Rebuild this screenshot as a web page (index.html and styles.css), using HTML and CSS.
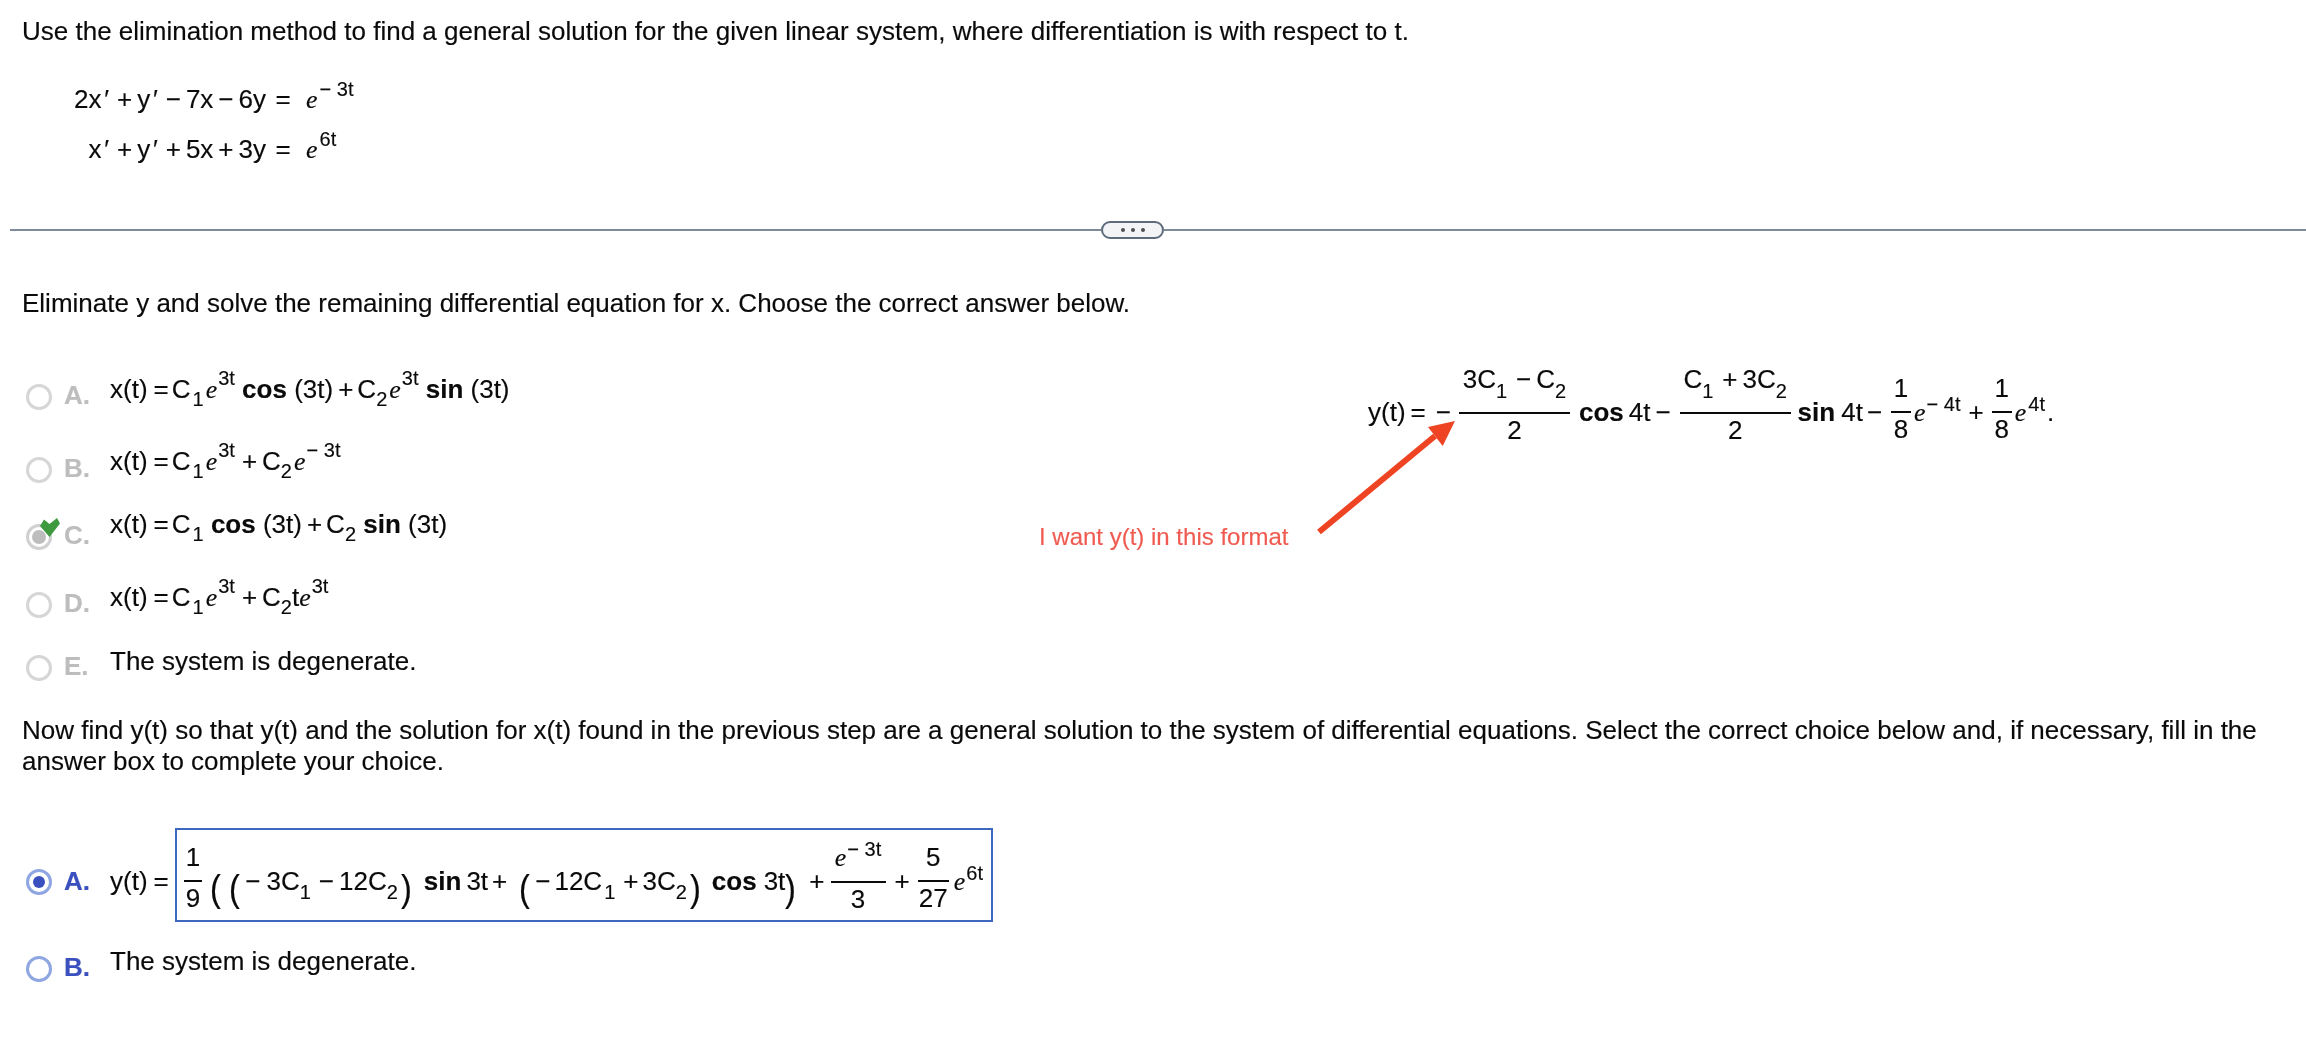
FILE: index.html
```html
<!DOCTYPE html>
<html lang="en">
<head>
<meta charset="utf-8">
<title>Elimination method</title>
<link rel="stylesheet" href="styles.css">
</head>
<body>
<main class="page">
  <p class="prompt first">Use the elimination method to find a general solution for the given linear system, where differentiation is with respect to t.</p>

  <div class="system">
    <div class="lhs">2x<i class="prime">′</i><span class="op">+</span>y<i class="prime">′</i><span class="op">−</span>7x<span class="op">−</span>6y</div>
    <div class="eq">=</div>
    <div class="rhs"><em>e</em><sup class="up">−&nbsp;3t</sup></div>
    <div class="lhs">x<i class="prime">′</i><span class="op">+</span>y<i class="prime">′</i><span class="op">+</span>5x<span class="op">+</span>3y</div>
    <div class="eq">=</div>
    <div class="rhs"><em>e</em><sup class="up">6t</sup></div>
  </div>

  <div class="divider">
    <span class="rule rule-left"></span>
    <span class="pill"><b></b><b></b><b></b></span>
    <span class="rule rule-right"></span>
  </div>

  <p class="prompt second">Eliminate y and solve the remaining differential equation for x. Choose the correct answer below.</p>

  <div class="choices muted">
    <div class="choice r1">
      <span class="letter"><span class="radio"></span>A.</span>
      <span class="math">x(t)<span class="eqs">=</span>C<sub class="ml-2">1</sub><em class="ml-2">e</em><sup class="hi">3t</sup> <b>cos</b> (3t)<span class="op">+</span>C<sub>2</sub><em class="ml-2">e</em><sup class="hi">3t</sup> <b>sin</b> (3t)</span>
    </div>
    <div class="choice r2">
      <span class="letter"><span class="radio"></span>B.</span>
      <span class="math">x(t)<span class="eqs">=</span>C<sub class="ml-2">1</sub><em class="ml-2">e</em><sup class="hi">3t</sup><span class="op wide">+</span>C<sub>2</sub><em class="ml-2">e</em><sup class="hi">−&nbsp;3t</sup></span>
    </div>
    <div class="choice r3">
      <span class="letter"><span class="radio picked">
        <svg class="tick" viewBox="0 0 20 19" aria-hidden="true"><path d="M0 8 L4 1.5 L9.5 6 L17 0 L20 5.5 L9.5 19 Z"/></svg>
      </span>C.</span>
      <span class="math">x(t)<span class="eqs">=</span>C<sub class="ml-2">1</sub> <b>cos</b> (3t)<span class="op">+</span>C<sub>2</sub> <b>sin</b> (3t)</span>
    </div>
    <div class="choice r4">
      <span class="letter"><span class="radio"></span>D.</span>
      <span class="math">x(t)<span class="eqs">=</span>C<sub class="ml-2">1</sub><em class="ml-2">e</em><sup class="hi">3t</sup><span class="op wide">+</span>C<sub>2</sub>t<em>e</em><sup class="hi">3t</sup></span>
    </div>
    <div class="choice r5">
      <span class="letter"><span class="radio"></span>E.</span>
      <span class="math">The system is degenerate.</span>
    </div>
  </div>

  <p class="prompt third">Now find y(t) so that y(t) and the solution for x(t) found in the previous step are a general solution to the system of differential equations. Select the correct choice below and, if necessary, fill in the answer box to complete your choice.</p>

  <div class="choices active">
    <div class="choice boxed">
      <span class="letter"><span class="radio on"></span>A.</span>
      <span class="math">y(t)<span class="eqs">=</span><span class="answer"><span class="frac w18"><span class="num">1</span><span class="den">9</span></span><span class="big ml-9">(</span><span class="big ml-10">(</span><span class="ml-6 mr-6">−</span>3C<sub>1</sub><span class="ml-8 mr-5">−</span>12C<sub>2</sub><span class="big ml-4">)</span><b class="ml-13">sin</b><span class="ml-5">3t</span><span class="ml-4 mr-13">+</span><span class="big">(</span><span class="ml-6 mr-4">−</span>12C<sub class="ml-2">1</sub><span class="ml-8 mr-4">+</span>3C<sub>2</sub><span class="big ml-4">)</span><b class="ml-12">cos</b><span class="ml-7">3t</span><span class="big ml-1">)</span><span class="ml-14 mr-6">+</span><span class="frac w55"><span class="num"><em>e</em><sup class="up ml-1">−&nbsp;3t</sup></span><span class="den">3</span></span><span class="ml-9 mr-8">+</span><span class="frac w31"><span class="num">5</span><span class="den">27</span></span><em class="ml-5">e</em><sup class="up ml-1">6t</sup></span></span>
    </div>
    <div class="choice plain">
      <span class="letter"><span class="radio"></span>B.</span>
      <span class="math">The system is degenerate.</span>
    </div>
  </div>

  <aside class="note">
    <div class="formula">y(t)<span class="ml-5">=</span><span class="ml-10">−</span><span class="frac tall w111 ml-8"><span class="num">3C<sub>1</sub><span class="ml-9 mr-5">−</span>C<sub>2</sub></span><span class="den">2</span></span><b class="ml-9">cos</b><span class="ml-5">4t</span><span class="ml-5">−</span><span class="frac tall w111 ml-9"><span class="num">C<sub>1</sub><span class="ml-9 mr-5">+</span>3C<sub>2</sub></span><span class="den">2</span></span><b class="ml-7">sin</b><span class="ml-6">4t</span><span class="ml-4">−</span><span class="frac w20 ml-9"><span class="num">1</span><span class="den">8</span></span><em class="ml-3">e</em><sup class="up ml-1">−&nbsp;4t</sup><span class="ml-8">+</span><span class="frac w20 ml-8"><span class="num">1</span><span class="den">8</span></span><em class="ml-3">e</em><sup class="up ml-2">4t</sup><span class="ml-2">.</span></div>
    <svg class="arrow" viewBox="0 0 150 125" aria-hidden="true">
      <line x1="3" y1="114" x2="119" y2="18"/>
      <polygon points="139,3 112,9 126.7,28"/>
    </svg>
    <div class="label">I want y(t) in this format</div>
  </aside>
</main>
</body>
</html>
```
FILE: styles.css
```css
* { box-sizing: border-box; }
html, body { margin: 0; padding: 0; background: #fff; }
body {
  font-family: "Liberation Sans", Arial, sans-serif;
  font-size: 26px;
  line-height: 32px;
  color: #0a0a0a;
  -webkit-text-stroke: 0.15px currentColor;
}
.page { position: relative; width: 2306px; height: 1054px; overflow: hidden; filter: blur(0.35px); }

.prompt { margin: 0 0 0 22px; }
.prompt.first { padding-top: 15px; }
.prompt.second { margin-top: 48px; }
.prompt.third { margin-top: 30px; width: 2270px; line-height: 31px; }

em { font-family: "Liberation Serif", serif; font-style: italic; }
sup, sub { font-size: 20px; line-height: 0; }
sup.up { vertical-align: 10px; }
sup.hi { vertical-align: 13px; margin-left: 1px; }
sub { vertical-align: -8px; }
.op { margin: 0 4px 0 5px; }
.op.wide { margin: 0 5px 0 7px; }
.eqs { margin: 0 3px 0 6px; }

.ml-1 { margin-left: 1px; } .ml-2 { margin-left: 2px; } .ml-3 { margin-left: 3px; }
.ml-4 { margin-left: 4px; } .ml-5 { margin-left: 5px; } .ml-6 { margin-left: 6px; }
.ml-7 { margin-left: 7px; } .ml-8 { margin-left: 8px; } .ml-9 { margin-left: 9px; }
.ml-10 { margin-left: 10px; } .ml-12 { margin-left: 12px; } .ml-13 { margin-left: 13px; }
.ml-14 { margin-left: 14px; }
.mr-4 { margin-right: 4px; } .mr-5 { margin-right: 5px; } .mr-6 { margin-right: 6px; }
.mr-8 { margin-right: 8px; } .mr-13 { margin-right: 13px; }

.system {
  display: grid;
  grid-template-columns: 192px 34px auto;
  grid-auto-rows: 50px;
  margin: 27px 0 0 74px;
  line-height: 50px;
}
.system .op { margin: 0 5px; }
.system sup.up { vertical-align: 12px; margin-left: 2px; }
.lhs { text-align: right; white-space: nowrap; }
.eq { text-align: center; }
.rhs { padding-left: 6px; }
.prime { display: inline-block; width: 10.5px; font-style: normal; font-size: 26px; line-height: 0; text-align: center; }

.divider { display: flex; align-items: center; margin: 47px 0 0 10px; height: 18px; }
.rule { display: block; height: 2px; background: #7f8b9b; }
.rule-left { width: 1091px; }
.rule-right { flex: 1; }
.pill {
  width: 63px; height: 18px;
  display: flex; align-items: center; justify-content: center; gap: 6px;
  border: 2px solid #5d6b7b; border-radius: 9px; background: #f2f4f6;
}
.pill b { width: 4px; height: 4px; border-radius: 50%; background: #4f4f4f; }

.choices { margin-left: 26px; }
.choices.muted {
  display: grid;
  grid-template-rows: 72px 63px 73px 64px 40px;
  margin-top: 54px;
}
.choice { display: flex; align-items: baseline; }
.letter {
  flex: none;
  position: relative;
  top: var(--shift);
  width: 84px;
  padding-left: 38px;
  font-weight: 700;
  color: #bdbdbd;
}
.r1 { --shift: 6px; }
.r2 { --shift: 7px; }
.r3 { --shift: 11px; }
.r4 { --shift: 6px; }
.r5 { --shift: 5px; }
.boxed { --shift: 0px; }
.plain { --shift: 6px; }

.radio {
  position: absolute;
  left: 0; top: 5px;
  width: 26px; height: 26px;
  border: 3px solid #d6d6d6;
  border-radius: 50%;
}
.math { white-space: nowrap; }

.radio.picked { border-color: #d0d0d0; }
.radio.picked::after {
  content: ""; position: absolute; left: 3px; top: 3px;
  width: 14px; height: 14px; border-radius: 50%; background: #bdbdbd;
}
.tick { position: absolute; left: 11px; top: -9px; width: 20px; height: 19px; z-index: 1; }
.tick path { fill: #3f9a3f; }

.active .letter { color: #3b50bf; }
.active .radio { border-color: #8fa6e2; }
.radio.on { top: 4px; }
.radio.on::after {
  content: ""; position: absolute; left: 4px; top: 4px;
  width: 12px; height: 12px; border-radius: 50%; background: #3b50bf;
}
.boxed { margin-top: 51px; }
.plain { margin-top: 23px; }

.answer {
  display: inline-block;
  height: 94px;
  width: 818px;
  padding: 12px 0 0 7px;
  margin-left: 3px;
  border: 2px solid #3d68c0;
}
.answer sub { vertical-align: -9px; }
.frac {
  display: inline-flex; flex-direction: column; align-items: stretch;
  text-align: center;
  vertical-align: 24px;
  line-height: 30px;
  white-space: nowrap;
}
.w18 { width: 18.5px; } .w20 { width: 20px; } .w31 { width: 31px; }
.w55 { width: 55px; } .w111 { width: 111px; }
.num { padding-bottom: 8px; border-bottom: 2px solid #0a0a0a; }
.den { padding-top: 1px; }
.frac.tall { vertical-align: 33px; }
.frac.tall .num { padding-bottom: 18px; }
.frac.tall sub { vertical-align: -10px; }
.big {
  display: inline-block;
  width: 9px;
  line-height: 0;
  text-align: center;
  transform: translateY(6.5px) scale(1.25, 1.45);
}

.note { position: absolute; left: 0; top: 0; width: 100%; height: 100%; pointer-events: none; }
.formula { position: absolute; left: 1368px; top: 364px; white-space: nowrap; }
.arrow { position: absolute; left: 1316px; top: 418px; width: 150px; height: 125px; }
.arrow line { stroke: #ee4423; stroke-width: 6; }
.arrow polygon { fill: #ee4423; }
.label { position: absolute; left: 1039px; top: 521px; color: #ef5b50; font-size: 24px; }
```
